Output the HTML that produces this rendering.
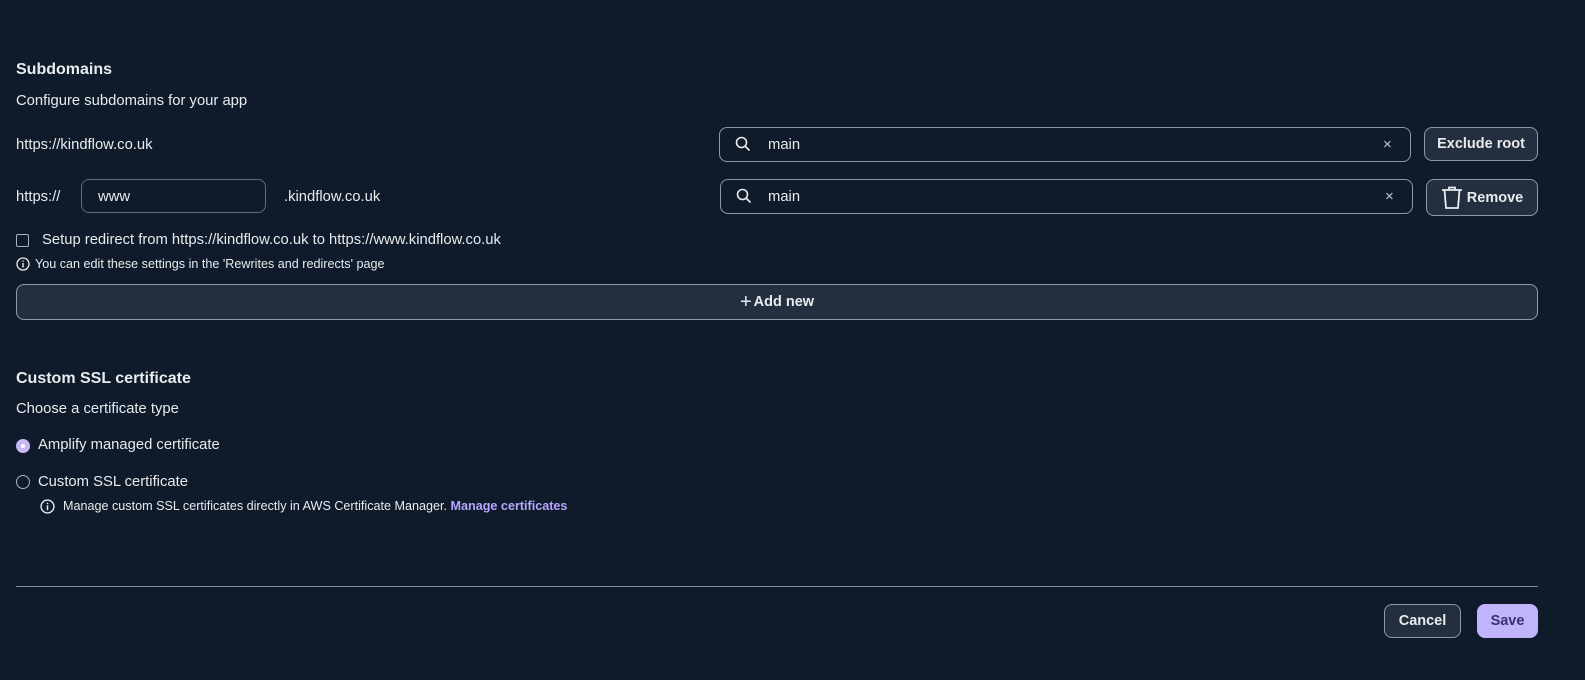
<!DOCTYPE html>
<html><head><style>
*{box-sizing:border-box;margin:0;padding:0}
body{width:1585px;height:680px;background:#0f1b2a;color:#e9ebed;font-family:"Liberation Sans",sans-serif;font-size:14.8px;position:relative;overflow:hidden}
.a{position:absolute;white-space:nowrap}
.h{font-weight:bold;font-size:16px}
.box{position:absolute;border:1px solid #8d99a8;border-radius:8px}
.btn{position:absolute;border:1px solid #8d99a8;border-radius:8px;background:#232f3e;font-weight:bold;font-size:14.5px;display:flex;align-items:center;justify-content:center;color:#e9ebed}
.x{position:absolute;color:#c4c7d4;font-size:15px}
.s{font-size:12.6px}
</style></head><body>
<div class="a h" style="left:16px;top:61px">Subdomains</div>
<div class="a" style="left:16px;top:93px">Configure subdomains for your app</div>
<div class="a" style="left:16px;top:137px">https://kindflow.co.uk</div>
<div class="box" style="left:719px;top:127px;width:692px;height:35px"></div>
<svg class="a" style="left:735px;top:136px" width="16" height="16" viewBox="0 0 16 16"><circle cx="6.5" cy="6.5" r="5" fill="none" stroke="#e9ebed" stroke-width="1.6"/><path d="M10 10l4.5 4.5" stroke="#e9ebed" stroke-width="1.6"/></svg>
<div class="a" style="left:768px;top:137px">main</div>
<div class="x" style="left:1383px;top:136px">×</div>
<div class="btn" style="left:1424px;top:127px;width:114px;height:34px">Exclude root</div>

<div class="a" style="left:16px;top:189px">https://</div>
<div class="box" style="left:81px;top:179px;width:185px;height:34px;border-color:#5f6b7a"></div>
<div class="a" style="left:98px;top:189px">www</div>
<div class="a" style="left:284px;top:189px">.kindflow.co.uk</div>
<div class="box" style="left:720px;top:179px;width:693px;height:35px"></div>
<svg class="a" style="left:736px;top:188px" width="16" height="16" viewBox="0 0 16 16"><circle cx="6.5" cy="6.5" r="5" fill="none" stroke="#e9ebed" stroke-width="1.6"/><path d="M10 10l4.5 4.5" stroke="#e9ebed" stroke-width="1.6"/></svg>
<div class="a" style="left:768px;top:189px">main</div>
<div class="x" style="left:1385px;top:188px">×</div>
<div class="btn" style="left:1426px;top:179px;width:112px;height:37px"><svg width="22" height="24" viewBox="0 0 22 24" style="margin-right:4px"><path d="M1 4h20M8 4V1.5h6V4M3.5 4l1.5 18h12l1.5-18" fill="none" stroke="#e9ebed" stroke-width="1.8"/></svg>Remove</div>

<div class="a" style="left:16px;top:234px;width:13px;height:13px;border:1.5px solid #aab3bf;border-radius:2px"></div>
<div class="a" style="left:42px;top:232px">Setup redirect from https://kindflow.co.uk to https://www.kindflow.co.uk</div>
<svg class="a" style="left:16px;top:257px" width="14" height="14" viewBox="0 0 14 14"><circle cx="7" cy="7" r="6" fill="none" stroke="#e9ebed" stroke-width="1.3"/><path d="M7 6v4.5M7 3.5v1.3" stroke="#e9ebed" stroke-width="1.4"/></svg>
<div class="a s" style="left:35px;top:257px">You can edit these settings in the 'Rewrites and redirects' page</div>
<div class="btn" style="left:16px;top:284px;width:1522px;height:36px"><span style="font-size:20px;font-weight:normal;margin-right:2px;line-height:1">+</span>Add new</div>

<div class="a h" style="left:16px;top:370px">Custom SSL certificate</div>
<div class="a" style="left:16px;top:401px">Choose a certificate type</div>
<div class="a" style="left:16px;top:439px;width:14px;height:14px;border-radius:50%;background:#c9b8f7;border:1px solid #c9b8f7"><div style="position:absolute;left:4px;top:4px;width:4px;height:4px;border-radius:50%;background:#fff"></div></div>
<div class="a" style="left:38px;top:437px">Amplify managed certificate</div>
<div class="a" style="left:16px;top:475px;width:14px;height:14px;border-radius:50%;border:1.5px solid #aab3bf"></div>
<div class="a" style="left:38px;top:474px">Custom SSL certificate</div>
<svg class="a" style="left:40px;top:499px" width="15" height="15" viewBox="0 0 14 14"><circle cx="7" cy="7" r="6" fill="none" stroke="#e9ebed" stroke-width="1.3"/><path d="M7 6v4.5M7 3.5v1.3" stroke="#e9ebed" stroke-width="1.4"/></svg>
<div class="a s" style="left:63px;top:499px">Manage custom SSL certificates directly in AWS Certificate Manager. <b style="color:#b8a6ff">Manage certificates</b></div>

<div class="a" style="left:16px;top:586px;width:1522px;height:1px;background:#7d8998"></div>
<div class="btn" style="left:1384px;top:604px;width:77px;height:34px">Cancel</div>
<div class="btn" style="left:1477px;top:604px;width:61px;height:34px;background:#c2b4fc;border-color:#c2b4fc;color:#3b2f74">Save</div>
</body></html>
